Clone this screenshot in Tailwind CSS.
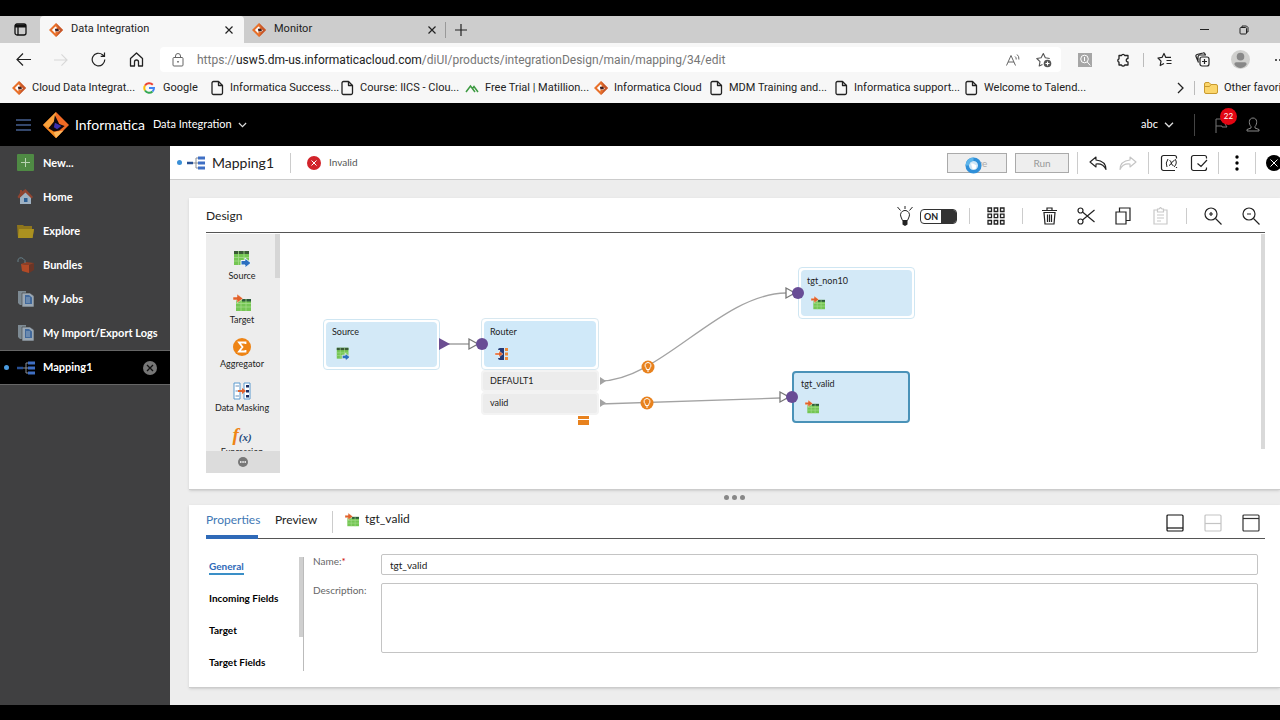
<!DOCTYPE html>
<html lang="en">
<head>
  <meta charset="UTF-8" />
  <title>Data Integration</title>
  <meta name="viewport" content="width=device-width, initial-scale=1" />
  <script src="https://cdn.jsdelivr.net/npm/@tailwindcss/browser@4"></script>
</head>
<body class="h-screen flex flex-col bg-black pt-4 pb-[15px] overflow-hidden font-['Lato',sans-serif] text-[#222]">

  <!-- Shared icons -->
  <svg class="hidden">
    <symbol id="logo" viewBox="0 0 24 24">
      <path d="M12 0 24 12 12 24 0 12Z" fill="#f26a24" />
      <path d="M12 0 0 12l5 3 6-5Z" fill="#f9a23c" />
      <path d="M0 12 12 24l4-4-8-3Z" fill="#f58a1f" />
      <path d="M12 24l7-7-6 1-3 1Z" fill="#fbb65a" />
      <path d="M11 3 10 9l-5 6 5 3 5-1 5-4-5-2Z" fill="#10080c" />
      <path d="m11 10 6 3-4 3-3-2Z" fill="#3b2fae" />
    </symbol>
    <symbol id="fav" viewBox="0 0 24 24">
      <path d="M12 0 24 12 12 24 0 12Z" fill="#e8702a" />
      <path d="M12 0 24 12 12 24 18 12Z" fill="#c5572c" />
      <path d="M11 6 5 12l6 6v-4l5 1 3-3-6-1V7Z" fill="#fff" />
      <path d="m10 10 6 0 1 4-6 0Z" fill="#3a2024" />
    </symbol>
    <symbol id="page" viewBox="0 0 14 16" fill="none" stroke="#222" stroke-width="1.3" stroke-linejoin="round">
      <path d="M2 3a1.5 1.5 0 0 1 1.500-1.500H8.500L12.500 5.500V13a1.500 1.500 0 0 1-1.500 1.500h-7.500A1.500 1.500 0 0 1 2 13Z" /><path d="M8.500 1.500V5.500h4" />
    </symbol>
    <symbol id="close" viewBox="0 0 10 10" stroke="#222" stroke-width="1.2"><path d="m1.500 1.500 7 7m0-7-7 7" /></symbol>
    <symbol id="source" viewBox="0 0 18 18">
      <path d="M1 1h15v14H1Z" fill="#74c653" /><path d="M1 1h15v3H1Z" fill="#3a5a36" />
      <path d="M5.500 1v14M11 1v14M1 7.500h15M1 11h15" stroke="#a5dc8c" stroke-width=".8" />
      <path d="M8 10.500h4V8l6 5-6 5v-3H8Z" fill="#2b6fc0" stroke="#eef4f8" stroke-width="1" />
    </symbol>
    <symbol id="target" viewBox="0 0 18 18">
      <path d="M3 5h15v12H3Z" fill="#74c653" /><path d="M9 5h9v2.500H9Z" fill="#2d5a3c" />
      <path d="M8 5v12M13 5v12M3 9.500h15M3 13h15" stroke="#a5dc8c" stroke-width=".8" />
      <path d="M0 3h4V0l6 4.500L4 9V6H0Z" fill="#e2622b" stroke="#f6f1ec" stroke-width=".5" />
    </symbol>
    <symbol id="mapping" viewBox="0 0 18 14">
      <path d="M0 7h6" stroke="#274f93" stroke-width="2.500" /><path d="M6 7h5M12 2H9v10h3" fill="none" stroke="#8a8f96" stroke-width="1" />
      <path d="M11 2h7M11 7h7M11 12h7" stroke="#3f6fc4" stroke-width="3" />
    </symbol>
    <symbol id="jobs" viewBox="0 0 18 18">
      <path d="M1 1h8v2H5v12H3L1 13Z" fill="#7d8a93" /><path d="M5 3h8l4 3v11H5Z" fill="#9aa7b3" stroke="#404041" stroke-width=".6" />
      <path d="M8 5h4l3 2.500V14H8Z" fill="#41699c" /><path d="M9 8h4M9 10h4M9 12h4" stroke="#a8bacb" stroke-width=".8" />
    </symbol>
    <symbol id="chev" viewBox="0 0 10 6" fill="none" stroke="#ddd" stroke-width="1.300"><path d="m1 .8 4 4 4-4" /></symbol>
    <symbol id="hint" viewBox="0 0 14 14">
      <circle cx="7" cy="7" r="6.500" fill="#e8821e" /><path d="M7 2.500a3 3 0 0 1 2 5.200L8.500 9.500h-3L5 7.700A3 3 0 0 1 7 2.500ZM6 11h2" fill="none" stroke="#fff" />
    </symbol>
  </svg>

  <!-- Browser tabs -->
  <div class="h-[27px] shrink-0 flex items-stretch bg-[#cdcdcd] font-['Roboto',sans-serif] text-[11px]">
    <div class="w-10 flex items-center pl-[14px]">
      <svg class="w-[13px] h-[13px]" viewBox="0 0 13 13" fill="none" stroke="#111" stroke-width="1.300"><rect x="1" y="1" width="11" height="11" rx="2" /><path d="M1 3h11" stroke-width="3" /><path d="M4 3v9" /></svg>
    </div>
    <div class="w-51 flex items-center bg-[#f7f7f7] rounded-t pl-[9px] pr-[10px]">
      <svg class="size-[14px] mr-2"><use href="#fav" /></svg>
      <span class="grow">Data Integration</span>
      <button aria-label="Close tab"><svg class="size-[10px]"><use href="#close" /></svg></button>
    </div>
    <div class="w-[202px] flex items-center pl-[8px] pr-[9px]">
      <svg class="size-[14px] mr-2"><use href="#fav" /></svg>
      <span class="grow">Monitor</span>
      <button aria-label="Close tab"><svg class="size-[10px]"><use href="#close" /></svg></button>
    </div>
    <div class="w-px h-4 self-center bg-[#999] ml-[-1px]"></div>
    <button class="pl-[9px]" aria-label="New tab"><svg class="size-3" viewBox="0 0 12 12" stroke="#222" stroke-width="1.200"><path d="M6 0v12M0 6h12" /></svg></button>
    <div class="ml-auto -mr-[9px] flex items-center gap-[30px]">
      <svg class="w-[9px] h-[10px]" viewBox="0 0 9 10" stroke="#222"><path d="M0 4.500h9" /></svg>
      <svg class="size-[10px]" viewBox="0 0 10 10" fill="none" stroke="#222"><rect x="1" y="2.500" width="6.500" height="6.500" rx="1" /><path d="M3 2.500V1h4.500L9 2.500V7H7.500" /></svg>
      <svg class="size-[10px]"><use href="#close" /></svg>
    </div>
  </div>

  <!-- Address bar -->
  <div class="h-[33px] shrink-0 flex items-center bg-[#f7f7f7] font-['Roboto',sans-serif]">
    <div class="w-40 flex items-center gap-[23px] pl-4">
      <svg class="size-[15px]" viewBox="0 0 15 15" fill="none" stroke="#222" stroke-width="1.200"><path d="M15 7.500H1M7 1.500 1 7.500l6 6" /></svg>
      <svg class="size-[14px]" viewBox="0 0 15 15" fill="none" stroke="#d8d8d8" stroke-width="1.200"><path d="M0 7.500h14M8 1.500l6 6-6 6" /></svg>
      <svg class="size-[15px]" viewBox="0 0 15 15" fill="none" stroke="#222" stroke-width="1.200"><path d="M13.800 7.500A6.300 6.300 0 1 1 11.500 2.700L13 4M13.500 .5V4.300H9.700" /></svg>
      <svg class="size-[15px]" viewBox="0 0 15 15" fill="none" stroke="#222" stroke-width="1.300" stroke-linejoin="round"><path d="M1.500 6.500 7.500 1l6 5.500V14H9.500V10a2 2 0 0 0-4 0v4h-4Z" /></svg>
    </div>
    <div class="grow h-[25px] flex items-center bg-white rounded-sm pl-3 pr-[9px]">
      <svg class="w-3 h-[14px] mr-[13px]" viewBox="0 0 12 14" fill="none" stroke="#666"><rect x="1" y="4.500" width="10" height="8.500" rx="1" /><path d="M3.500 4.500V3a2.500 2.500 0 0 1 5 0v1.500" /><circle cx="6" cy="8.800" r=".5" fill="#666" /></svg>
      <span class="grow text-[12px] text-[#767676]">https://<span class="text-[#222]">usw5.dm-us.informaticacloud.com</span>/diUI/products/integrationDesign/main/mapping/34/edit</span>
      <svg class="w-[14px] h-[14px] mr-4" viewBox="0 0 14 14" fill="none" stroke="#666"><path d="m.5 12.500 4.500-10 4.500 10M2 9h6M9 3.500q1.500 1 1.200 3M11 1.500q2.300 1.800 1.900 5" /></svg>
      <svg class="size-4" viewBox="0 0 16 16" fill="none" stroke="#555" stroke-width="1.100" stroke-linejoin="round"><path d="M6.500 12.500 3.200 14 4 9.700.8 6.500l4.300-.7L7.300 1.500l2 4.300 4.400.7" /><circle cx="11.500" cy="11.500" r="3.800" fill="#555" stroke="none" /><path d="M11.500 9.500v4M9.500 11.500h4" stroke="#fff" /></svg>
    </div>
    <div class="shrink-0 flex items-center pl-[17px] -mr-2">
      <svg class="size-[14px] mr-6" viewBox="0 0 14 14" fill="none" stroke="#fff"><rect width="14" height="14" fill="#a6a6a6" stroke="none" /><circle cx="6.500" cy="6" r="3.800" /><path d="m9.300 9 3 3.500M6.500 4v4" /></svg>
      <svg class="size-[14px] mr-[13px]" viewBox="0 0 14 14" fill="none" stroke="#222" stroke-width="1.300" stroke-linejoin="round"><path d="M3 2.500h2.500a1.700 1.700 0 0 1 3.200 0H12v3a1.700 1.700 0 1 0 0 3.500v3H8.700a1.700 1.700 0 0 1-3.200 0H3V9.200A1.800 1.800 0 0 1 3 5.800Z" /></svg>
      <div class="w-px h-[14px] bg-[#bbb] mr-[13px]"></div>
      <svg class="size-[15px] mr-[23px]" viewBox="0 0 15 15" fill="none" stroke="#222" stroke-width="1.200" stroke-linejoin="round"><path d="M7 11.500 3.200 13.500 4 9.200 1 6l4-.6L7 1.500l1.800 3.900H14M9.500 8.500h5M9.500 11.500h5" /></svg>
      <svg class="size-[15px] mr-[21px]" viewBox="0 0 15 15" fill="none" stroke="#222" stroke-width="1.200"><rect x="5" y="5" width="9" height="9" rx="2" /><path d="M9.500 7v5M7 9.500h5M3.500 10.500 1 4.500a1.500 1.500 0 0 1 1-2L8 1a1.500 1.500 0 0 1 2 1l.5 1.500M3 8.500V5a2 2 0 0 1 2-2h6" /></svg>
      <svg class="size-[19px] mr-6" viewBox="0 0 20 20"><circle cx="10" cy="10" r="10" fill="#d0d0ce" /><circle cx="10" cy="7" r="4" fill="#888" /><path d="M3.500 15q0-2 2-2h9q2 0 2 2-2.500 4-6.500 4t-6.500-4Z" fill="#888" /></svg>
      <svg class="w-[14px] h-1" viewBox="0 0 14 4" fill="#222"><circle cx="2" cy="2" r="1" /><circle cx="6" cy="2" r="1" /><circle cx="10" cy="2" r="1" /></svg>
    </div>
  </div>

  <!-- Bookmarks -->
  <nav class="h-[27px] shrink-0 flex items-center bg-[#f7f7f7] pl-3 pb-[3px] font-['Roboto',sans-serif] text-[11px] whitespace-nowrap">
    <a href="#" class="w-[131px] shrink-0 flex items-center gap-[6px]"><svg class="size-[14px]"><use href="#fav" /></svg>Cloud Data Integrat...</a>
    <a href="#" class="w-[67px] shrink-0 flex items-center gap-2">
      <svg class="size-[12px]" viewBox="0 0 12 12" fill="none" stroke-width="2"><path d="M9.800 2.700A5 5 0 0 0 2 3.500" stroke="#ea4335" /><path d="M2 3.500a5 5 0 0 0 0 5" stroke="#fbbc05" /><path d="M2 8.500a5 5 0 0 0 7.500 1" stroke="#34a853" /><path d="M9.500 9.500A5 5 0 0 0 11 6H6" stroke="#4285f4" /></svg>Google</a>
    <a href="#" class="w-[130px] shrink-0 flex items-center gap-[6px]"><svg class="w-[14px] h-4"><use href="#page" /></svg>Informatica Success...</a>
    <a href="#" class="w-[125px] shrink-0 flex items-center gap-[6px]"><svg class="w-[14px] h-4"><use href="#page" /></svg>Course: IICS - Clou...</a>
    <a href="#" class="w-[129px] shrink-0 flex items-center gap-[6px]">
      <svg class="size-[14px]" viewBox="0 0 14 14" fill="none" stroke="#3d9a41" stroke-width="1.500"><path d="m1 11 4.500-6L10 11M7.500 7.500 9 5.500l4 5.500" /></svg>Free Trial | Matillion...</a>
    <a href="#" class="w-[115px] shrink-0 flex items-center gap-[6px]"><svg class="size-[14px]"><use href="#fav" /></svg>Informatica Cloud</a>
    <a href="#" class="w-[125px] shrink-0 flex items-center gap-[6px]"><svg class="w-[14px] h-4"><use href="#page" /></svg>MDM Training and...</a>
    <a href="#" class="w-[130px] shrink-0 flex items-center gap-[6px]"><svg class="w-[14px] h-4"><use href="#page" /></svg>Informatica support...</a>
    <a href="#" class="shrink-0 flex items-center gap-[6px]"><svg class="w-[14px] h-4"><use href="#page" /></svg>Welcome to Talend...</a>
    <div class="ml-auto -mr-5 w-[123px] shrink-0 flex items-center">
      <svg class="w-[7px] h-3 mr-[10px]" viewBox="0 0 7 12" fill="none" stroke="#222" stroke-width="1.300"><path d="m1 1 5 5-5 5" /></svg>
      <div class="w-px h-[14px] bg-[#bbb] mr-[9px]"></div>
      <a href="#" class="flex items-center gap-[6px]"><svg class="w-[14px] h-3 shrink-0" viewBox="0 0 14 12"><path d="M.5 2A1.500 1.500 0 0 1 2 .5h3L7 2.500h5A1.500 1.500 0 0 1 13.500 4v6a1.500 1.500 0 0 1-1.500 1.500H2A1.500 1.500 0 0 1 .5 10Z" fill="#fbd66c" stroke="#c99a2e" /><path d="M.5 4.500h5l1.500-2" fill="none" stroke="#c99a2e" /></svg>Other favorites</a>
    </div>
  </nav>

  <!-- App header -->
  <header class="h-[43px] shrink-0 flex items-center bg-black text-white pl-4">
    <button class="mr-3" aria-label="Menu"><svg class="w-[15px] h-3" viewBox="0 0 15 12" stroke="#465f8e" stroke-width="1.300"><path d="M0 1h15M0 6h15M0 11h15" /></svg></button>
    <svg class="size-[26px] mr-[6px]"><use href="#logo" /></svg>
    <span class="text-[14px] mr-2">Informatica</span>
    <button class="flex items-center gap-[6px] text-[11px]">Data Integration <svg class="w-[9px] h-[6px]"><use href="#chev" /></svg></button>
    <div class="ml-auto flex items-center pr-5">
      <button class="flex items-center gap-[6px] text-[11px] mr-5">abc <svg class="w-[10px] h-[6px]"><use href="#chev" /></svg></button>
      <div class="w-px h-[22px] bg-[#444] mr-5"></div>
      <button class="relative mr-[18px]" aria-label="Notifications">
        <svg class="w-[13px] h-4" viewBox="0 0 13 16" fill="none" stroke="#777"><path d="M1 16V2h6v2h5L10 7l2 3H7V9H1" /></svg>
        <span class="absolute -top-[9px] left-[5px] size-[17px] rounded-full bg-[#e30613] text-[8px] leading-[17px] text-center">22</span>
      </button>
      <button aria-label="Account"><svg class="w-[14px] h-[15px]" viewBox="0 0 14 15" fill="none" stroke="#888"><path d="M5 9.500C2.500 7 2.500 1 7 1s4.500 6 2 8.500V11l4 1.500V14H1v-1.500L5 11Z" /></svg></button>
    </div>
  </header>

  <div class="grow min-h-0 flex">
    <!-- Sidebar -->
    <aside class="w-[170px] shrink-0 bg-[#404041] text-white text-[11px] font-bold whitespace-nowrap">
      <a href="#" class="h-[34px] flex items-center pl-[17px] gap-2">
        <svg class="size-[18px]" viewBox="0 0 18 18"><rect x="0" y="0" width="17" height="17" rx="1" fill="#4f8a44" /><path d="M8.500 4v9M4 8.500h9" stroke="#b9d3b3" /></svg>New...</a>
      <a href="#" class="h-[34px] flex items-center pl-[17px] gap-2">
        <svg class="size-[18px]" viewBox="0 0 18 18"><path d="M3 9 8.500 4 14 9v7H3Z" fill="#9fb1c2" /><path d="M3 5V2h2v1.500L8.500 1 16 9l-1.500 1.500-6-6L2 10.500.5 9Z" fill="#8f4431" /><path d="M7 10h3.500v4H7Z" fill="#2d5f94" /></svg>Home</a>
      <a href="#" class="h-[34px] flex items-center pl-[17px] gap-2">
        <svg class="size-[18px]" viewBox="0 0 18 18"><path d="M0 3h6l1 1h8v3h2l-1.500 9H1Z" fill="#8f761c" /><path d="M2 7h15l-1.500 9H1Z" fill="#ab9120" /></svg>Explore</a>
      <a href="#" class="h-[34px] flex items-center pl-[17px] gap-2">
        <svg class="size-[18px]" viewBox="0 0 18 18"><path d="m4 8 8 1v8l-7-2Z" fill="#b24a26" /><path d="m12 9 5-2v7l-5 3Z" fill="#6b3526" /><path d="m4 8 5-2 8 1-5 2Z" fill="#8f3f26" /><path d="M1 6V3.500q3-4 7 1V7" fill="none" stroke="#66808a" /></svg>Bundles</a>
      <a href="#" class="h-[34px] flex items-center pl-[17px] gap-2"><svg class="size-[18px]"><use href="#jobs" /></svg>My Jobs</a>
      <a href="#" class="h-[34px] flex items-center pl-[17px] gap-2"><svg class="size-[18px]"><use href="#jobs" /></svg>My Import/Export Logs</a>
      <div class="h-[35px] flex items-center bg-black border-y border-[#666] pl-1 pr-[13px]">
        <span class="size-[5px] rounded-full bg-[#4a9be0] mr-2"></span>
        <svg class="w-[18px] h-[14px] mr-2"><use href="#mapping" /></svg>
        <a href="#" class="grow">Mapping1</a>
        <button aria-label="Close Mapping1"><svg class="size-[14px]" viewBox="0 0 14 14"><circle cx="7" cy="7" r="7" fill="#777" /><path d="m4 4 6 6m0-6-6 6" stroke="#111" stroke-width="1.300" /></svg></button>
      </div>
    </aside>

    <main class="grow min-w-0 flex flex-col bg-[#ededed]">
      <!-- Asset bar -->
      <div class="h-[34px] shrink-0 flex items-center bg-white border-b border-[#ccc] pl-[7px]">
        <span class="size-[5px] rounded-full bg-[#3a8fd6] mr-[5px]"></span>
        <svg class="w-[18px] h-[14px] mr-[7px]"><use href="#mapping" /></svg>
        <h1 class="w-[78px] text-[14px]">Mapping1</h1>
        <div class="w-px h-5 bg-[#ccc] mr-4"></div>
        <svg class="size-[14px] mr-2" viewBox="0 0 14 14"><circle cx="7" cy="7" r="7" fill="#d2232a" /><path d="m4.500 4.500 5 5m0-5-5 5" stroke="#fff" /></svg>
        <span class="text-[10px] text-[#555]">Invalid</span>
        <div class="ml-auto -mr-[2px] shrink-0 flex items-center">
          <button class="relative w-[60px] h-5 border border-[#aaa] bg-[#eee] text-[10px] leading-4 text-[#aaa] mr-2">
            Save
            <svg class="absolute left-[17px] top-[3px] size-[17px]" viewBox="0 0 17 17"><circle cx="8.500" cy="8.500" r="6.300" fill="#cfe6f6" stroke="#2f8fd8" stroke-width="3.500" /><path d="M2.200 8.500a6.300 6.300 0 0 1 6.300-6.300" fill="none" stroke="#5cb4ea" stroke-width="3.500" /><path d="M6 6.500h2l3.500 2-1 3.500h-3Z" fill="#fff" /></svg>
          </button>
          <button class="w-[54px] h-5 border border-[#aaa] bg-[#eee] text-[10px] leading-4 text-[#999] mr-2">Run</button>
          <div class="w-px h-[22px] bg-[#ccc] mr-[11px]"></div>
          <button class="mr-3" aria-label="Undo"><svg class="w-[18px] h-[14px]" viewBox="0 0 18 14" fill="none" stroke="#222" stroke-width="1.100" stroke-linejoin="round"><path d="M7 1 1 6l6 5V8q7-1 10 5.500Q17 5 7 4Z" /></svg></button>
          <button class="mr-[11px]" aria-label="Redo"><svg class="w-[18px] h-[14px]" viewBox="0 0 18 14" fill="none" stroke="#c4c4c4" stroke-width="1.100" stroke-linejoin="round"><path d="m11 1 6 5-6 5V8Q4 7 1 13.500 1 5 11 4Z" /></svg></button>
          <div class="w-px h-[22px] bg-[#ccc] mr-[11px]"></div>
          <button class="mr-3" aria-label="Parameters"><svg class="size-[18px]" viewBox="0 0 18 18" fill="none" stroke="#222"><path d="M15 16.500H3.500a2 2 0 0 1-2-2v-11a2 2 0 0 1 2-2h11a2 2 0 0 1 2 2v1M16.500 14v-1" stroke-width="1.200" /><path d="M8 5q-3 4-1 8M15 5q3 4-1 8M9 11.500q1 0 2.500-2.500t3-2.500M9.500 6.500q1.500 0 1.800 2.500t2.200 2.500" /></svg></button>
          <button class="mr-[10px]" aria-label="Validate"><svg class="size-[18px]" viewBox="0 0 18 18" fill="none" stroke="#222" stroke-width="1.200"><path d="M16.500 13.500v1a2 2 0 0 1-2 2h-11a2 2 0 0 1-2-2v-11a2 2 0 0 1 2-2h11a2 2 0 0 1 2 2v1M7.500 9.500l3.500 3 6-6.500" /></svg></button>
          <div class="w-px h-[22px] bg-[#ccc] mr-4"></div>
          <button class="mr-4" aria-label="More"><svg class="w-1 h-4" viewBox="0 0 4 16"><circle cx="2" cy="2" r="1.700" /><circle cx="2" cy="8" r="1.700" /><circle cx="2" cy="14" r="1.700" /></svg></button>
          <div class="w-px h-[22px] bg-[#ccc] mr-[10px]"></div>
          <button aria-label="Close"><svg class="size-4" viewBox="0 0 16 16"><circle cx="8" cy="8" r="8" /><path d="m4.500 4.500 7 7m0-7-7 7" stroke="#fff" /></svg></button>
        </div>
      </div>

      <!-- Design panel -->
      <section class="mt-[18px] ml-[19px] h-[292px] shrink-0 bg-white pl-[17px] pr-[15px] border-b border-[#ccc] shadow">
        <div class="h-[35px] flex items-center pt-[2px] border-b border-[#555]">
          <h2 class="text-[12px]">Design</h2>
          <div class="ml-auto flex items-center pr-[5px]">
            <svg class="w-4 h-5 mr-[7px]" viewBox="0 0 16 20" fill="none" stroke="#222"><path d="M5.500 14.500 4 11a4.500 4.500 0 1 1 8 0l-1.500 3.500Z" /><path d="M5.500 15h5v3.500L8 20l-2.500-1.500Z" fill="#222" stroke="none" /><path d="M8 0v3M3.500 4.500.5 1M12.500 4.500l3-3.500" /></svg>
            <button class="w-[37px] h-[15px] flex border border-[#333] rounded overflow-hidden text-[9px] leading-[13px] font-bold mr-3" role="switch" aria-checked="true"><span class="grow">ON</span><span class="w-[15px] h-full bg-[#333]"></span></button>
            <div class="w-px h-4 bg-[#ccc] mr-[17px]"></div>
            <button class="mr-[17px]" aria-label="Grid"><svg class="size-[18px]" viewBox="0 0 18 18" fill="none" stroke="#222" stroke-width="1.300"><path d="M1 1h3.500v3.500H1ZM7.200 1h3.500v3.500H7.200ZM13.500 1H17v3.500h-3.500ZM1 7.200h3.500v3.500H1ZM7.200 7.200h3.500v3.500H7.200ZM13.500 7.200H17v3.500h-3.500ZM1 13.500h3.500V17H1ZM7.200 13.500h3.500V17H7.200ZM13.500 13.500H17V17h-3.500Z" /></svg></button>
            <div class="w-px h-4 bg-[#ccc] mr-[19px]"></div>
            <button class="mr-5" aria-label="Delete"><svg class="w-[15px] h-[18px]" viewBox="0 0 15 18" fill="none" stroke="#222" stroke-width="1.200"><path d="M0 3.500h15M5 3V1h5v2M2 5.500h11L12 17H3ZM5.500 7.500v7.500M7.500 7.500v7.500M9.500 7.500v7.500" /></svg></button>
            <button class="mr-5" aria-label="Cut"><svg class="size-[18px]" viewBox="0 0 18 18" fill="none" stroke="#222" stroke-width="1.200"><circle cx="3.500" cy="3.500" r="2.500" /><circle cx="3.500" cy="14.500" r="2.500" /><path d="M5.500 5 17.500 15M5.500 13 17.500 3" /></svg></button>
            <button class="mr-[22px]" aria-label="Copy"><svg class="w-4 h-[18px]" viewBox="0 0 16 18" fill="none" stroke="#222" stroke-width="1.200"><path d="M1 5h10v12H1ZM4.500 5V1H15v12.500h-4" /></svg></button>
            <button class="mr-[18px]" aria-label="Paste"><svg class="w-[15px] h-[18px]" viewBox="0 0 15 18" fill="none" stroke="#c8c8c8" stroke-width="1.200"><path d="M4 3H1v14h13V3h-3M4.500 2H6l1.500-1.500L9 2h1.500v3h-6ZM4 8h7M4 11h7M4 14h4" /></svg></button>
            <div class="w-px h-4 bg-[#ccc] mr-[17px]"></div>
            <button class="mr-5" aria-label="Zoom in"><svg class="size-[18px]" viewBox="0 0 18 18" fill="none" stroke="#222" stroke-width="1.200"><circle cx="7" cy="7" r="6" /><path d="M11.500 11.500 17.500 17.500M7 5v4M5 7h4" /></svg></button>
            <button aria-label="Zoom out"><svg class="size-[18px]" viewBox="0 0 18 18" fill="none" stroke="#222" stroke-width="1.200"><circle cx="7" cy="7" r="6" /><path d="M11.500 11.500 17.500 17.500M5 7h4" /></svg></button>
          </div>
        </div>

        <div class="flex pt-px">
          <!-- Transformation palette -->
          <div class="w-[74px] h-[239px] shrink-0 flex flex-col bg-[#ededed] text-[9px] leading-3 text-center">
            <div class="relative h-[217px] overflow-hidden pt-4 pr-[2px]">
              <div class="h-11 flex flex-col items-center gap-[2px]"><svg class="size-[18px]"><use href="#source" /></svg>Source</div>
              <div class="h-11 flex flex-col items-center gap-[2px]"><svg class="size-[18px]"><use href="#target" /></svg>Target</div>
              <div class="h-11 flex flex-col items-center gap-[2px]"><svg class="size-[18px]" viewBox="0 0 18 18"><circle cx="9" cy="9" r="9" fill="#ee8415" /><path d="M12.500 6V4.500H6L9.500 9 6 13.500h6.500V12" fill="none" stroke="#fff" stroke-width="1.800" /></svg>Aggregator</div>
              <div class="h-11 flex flex-col items-center gap-[2px]"><svg class="size-[18px]" viewBox="0 0 18 18"><path d="M1 1h6v16H1ZM11 1h6v16h-6Z" fill="#fff" stroke="#5a9ad0" /><path d="M2.500 4H6M2.500 9H6M2.500 14H6" stroke="#6d8fb5" /><path d="M13 3h3v2.500h-3ZM13 8h3v2.500h-3ZM13 13h3v2.500h-3Z" fill="#1b2f63" /><path d="M5 8h4V6l4 3-4 3v-2H5Z" fill="#e2622b" /></svg>Data Masking</div>
              <div class="h-11 flex flex-col items-center gap-[2px]"><span class="h-[18px] font-['Liberation_Serif',serif] italic font-bold text-[#1f4a7c] text-[11px] leading-[18px]"><span class="text-[19px] text-[#ee8415]">f</span>(x)</span>Expression</div>
              <div class="absolute right-0 top-0 w-[5px] h-11 bg-[#d6d6d6]"></div>
            </div>
            <button class="grow flex items-center justify-center bg-[#dcdcdc]" aria-label="More transformations"><svg class="size-[10px]" viewBox="0 0 10 10"><circle cx="5" cy="5" r="5" fill="#777" /><path d="M2 5h1.500M4.300 5h1.500M6.500 5H8" stroke="#fff" stroke-width="1.300" /></svg></button>
          </div>

          <!-- Mapping canvas -->
          <div class="relative grow h-[239px] text-[9px] leading-3 overflow-hidden">
            <svg class="absolute left-0 top-0 w-[640px] h-[239px]" fill="none" stroke="#a3a3a3" stroke-width="1.300">
              <path d="M168 110h22M320 147c60 0 120-87 186-88M320 170l180-6" />
              <path d="m189 105 9 5-9 5ZM506 54l9 5-9 5ZM500 158l9 5-9 5Z" fill="#fff" stroke="#777" />
              <path d="M320 143l6 4-6 4ZM320 165l6 4-6 4Z" fill="#a3a3a3" stroke="none" />
            </svg>
            <div class="absolute left-[43px] top-[85px] w-[117px] h-[51px] rounded border border-[#cfe6f2] p-[2px]"><div class="h-full rounded-sm bg-[#d3e9f7] pl-[6px] pt-1">Source<svg class="size-[14px] ml-1 mt-[9px]"><use href="#source" /></svg></div></div>
            <svg class="absolute left-[159px] top-[104px] w-[11px] h-3" viewBox="0 0 11 12"><path d="m0 0 11 6-11 6Z" fill="#6b4d91" /></svg>

            <div class="absolute left-[201px] top-[84px] w-[118px]">
              <div class="h-[52px] rounded border border-[#d8e8f0] p-[2px]"><div class="h-full rounded-sm bg-[#d0e9f9] pl-[6px] pt-[5px]">Router
                <svg class="size-[14px] ml-[5px] mt-[9px]" viewBox="0 0 14 14"><path d="M5 1h4v12H5Q3 13 3 11h2V3H3Q3 1 5 1Z" fill="#253a77" /><path d="M10 1h3v3h-3ZM10 5.500h3v3h-3ZM10 10h3v3h-3Z" fill="#ee8a3a" /><path d="M0 6h4V4l4 3-4 3V8H0Z" fill="#e2622b" stroke="#fff" stroke-width=".4" /></svg></div></div>
              <div class="h-[22px] rounded border-2 border-[#f3f3f3] bg-[#ececec] pl-[7px] leading-[17px]">DEFAULT1</div>
              <div class="h-[23px] rounded border-2 border-[#f3f3f3] bg-[#ececec] pl-[7px] leading-[18px]">valid</div>
            </div>
            <div class="absolute left-[196px] top-[104px] size-3 rounded-full bg-[#684c95]"></div>
            <svg class="absolute left-[298px] top-[182px] w-[11px] h-[9px]" viewBox="0 0 11 9"><rect width="11" height="9" fill="#e8821e" /><path d="M0 3.500h11" stroke="#fff" /></svg>

            <svg class="absolute left-[361px] top-[126px] size-[14px]"><use href="#hint" /></svg>
            <svg class="absolute left-[360px] top-[162px] size-[14px]"><use href="#hint" /></svg>

            <div class="absolute left-[518px] top-[33px] w-[117px] h-[52px] rounded border border-[#cfe6f2] p-[2px]"><div class="h-full rounded-sm bg-[#d3e9f7] pl-[6px] pt-[5px]">tgt_non10<svg class="size-[14px] ml-1 mt-[9px]"><use href="#target" /></svg></div></div>
            <div class="absolute left-[512px] top-[53px] size-3 rounded-full bg-[#684c95]"></div>
            <div class="absolute left-[512px] top-[137px] w-[118px] h-[52px] rounded border-2 border-[#4a92b8] bg-[#d3e9f7] pl-[7px] pt-[5px]">tgt_valid<svg class="size-[14px] ml-1 mt-[10px]"><use href="#target" /></svg></div>
            <div class="absolute left-[506px] top-[157px] size-3 rounded-full bg-[#684c95]"></div>
            <div class="absolute right-0 top-0 w-1 h-[215px] bg-[#d9d9d9]"></div>
          </div>
        </div>
      </section>

      <div class="ml-[19px] h-[15px] shrink-0 flex items-center justify-center gap-[3px]">
        <span class="size-[5px] rounded-full bg-[#888]"></span><span class="size-[5px] rounded-full bg-[#888]"></span><span class="size-[5px] rounded-full bg-[#888]"></span>
      </div>

      <!-- Properties panel -->
      <section class="ml-[19px] h-[183px] shrink-0 bg-white pl-[17px] border-b border-[#ccc] shadow">
        <div class="h-[34px] mr-[15px] flex items-stretch border-b border-[#555] text-[12px] leading-[27px]">
          <button class="h-[34px] w-[52px] pb-[2px] border-b-4 border-[#2f6ab8] text-[#3f78b5] mr-[17px]">Properties</button>
          <button class="w-[41px] mr-4 pb-1">Preview</button>
          <div class="w-px h-[22px] mt-[6px] bg-[#ccc] mr-3"></div>
          <svg class="size-[14px] mt-2 mr-[6px]"><use href="#target" /></svg>
          <span>tgt_valid</span>
          <div class="ml-auto flex items-center gap-5 pr-[5px] pt-[2px]">
            <button aria-label="Minimize"><svg class="w-[18px] h-[18px]" viewBox="0 0 18 18" fill="none" stroke="#111" stroke-width="1.200"><rect x="1" y="1" width="16" height="16" rx="1" /><path d="M1 14h16" /></svg></button>
            <button aria-label="Split"><svg class="w-[18px] h-[18px]" viewBox="0 0 18 18" fill="none" stroke="#c4c4c4" stroke-width="1.200"><rect x="1" y="1" width="16" height="16" rx="1" /><path d="M1 9.500h16" /></svg></button>
            <button aria-label="Maximize"><svg class="w-[18px] h-[18px]" viewBox="0 0 18 18" fill="none" stroke="#333" stroke-width="1.200"><rect x="1" y="1" width="16" height="16" rx="1" /><path d="M1 4.500h16" /></svg></button>
          </div>
        </div>

        <div class="flex pt-[15px]">
          <nav class="relative w-[98px] h-[114px] mt-[3px] shrink-0 flex flex-col items-start pl-[3px] pt-[2px] border-r border-[#bbb] text-[10px] leading-[14px] font-bold text-black">
            <a href="#" class="border-b-2 border-[#3a8fc7] text-[#2f6ab8] mb-4">General</a>
            <a href="#" class="mb-[18px]">Incoming Fields</a>
            <a href="#" class="mb-[18px]">Target</a>
            <a href="#">Target Fields</a>
            <div class="absolute right-0 top-0 w-1 h-20 bg-[#cfcfcf]"></div>
          </nav>
          <form class="grow grid grid-cols-[58px_1fr] content-start gap-x-[10px] gap-y-2 pl-[9px] pr-[22px] text-[10px] text-[#666]">
            <label for="name" class="leading-[14px]">Name:<span class="text-[#c00]">*</span></label>
            <input id="name" type="text" value="tgt_valid" class="h-[21px] w-full border border-[#c4c4c4] rounded-xs px-2 text-[#222]">
            <label for="description" class="leading-[14px] whitespace-nowrap">Description:</label>
            <textarea id="description" class="h-[70px] w-full border border-[#c4c4c4] rounded-xs px-2 resize-none"></textarea>
          </form>
        </div>
      </section>
    </main>
  </div>
</body>
</html>
